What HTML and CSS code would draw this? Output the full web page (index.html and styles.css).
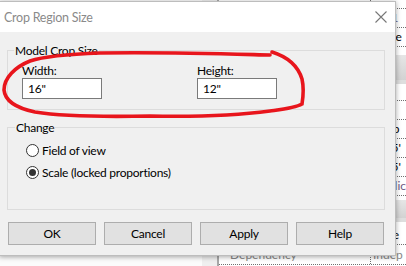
FILE: index.html
```html
<!DOCTYPE html>
<html lang="en">
<head>
  <meta charset="UTF-8" />
  <title>Crop Region Size</title>
  <link rel="stylesheet" href="styles.css">
</head>
<body>
  <div class="desktop">

    <!-- application behind the dialog -->
    <div class="app">
      <div class="app-left"></div>
      <div class="app-gutter"></div>
      <div class="props">
        <div class="prop-row top"><span class="prop-name"></span><span class="prop-value"></span></div>
        <div class="prop-row"><span class="prop-name"></span><span class="prop-value muted">&nbsp;&nbsp;&nbsp;&nbsp;&nbsp;&nbsp;1</span></div>
        <div class="prop-row"><span class="prop-name"></span><span class="prop-value">None</span></div>
        <div class="prop-spacer"></div>
        <div class="prop-header"></div>
        <div class="prop-header thin"></div>
        <div class="prop-row low"><span class="prop-name"></span><span class="prop-value"></span></div>
        <div class="prop-row"><span class="prop-name"></span><span class="prop-value"></span></div>
        <div class="prop-row"><span class="prop-name"></span><span class="prop-value">Cusp</span></div>
        <div class="prop-row"><span class="prop-name"></span><span class="prop-value">&nbsp;&nbsp;&nbsp;&nbsp;&nbsp;&nbsp;5'</span></div>
        <div class="prop-row"><span class="prop-name"></span><span class="prop-value">&nbsp;&nbsp;&nbsp;&nbsp;&nbsp;&nbsp;5'</span></div>
        <div class="prop-row"><span class="prop-name"></span><span class="prop-value muted">Applic</span></div>
        <div class="prop-spacer small"></div>
        <div class="prop-header short"></div>
        <div class="prop-header thin"></div>
        <div class="prop-spacer small"></div>
        <div class="prop-row"><span class="prop-name"></span><span class="prop-value">&nbsp;&nbsp;&nbsp;Vie</span></div>
        <div class="prop-row last"><span class="prop-name faded">Dependency</span><span class="prop-value faded">Indep</span></div>
      </div>
    </div>

    <!-- dialog -->
    <div class="dialog">
      <div class="titlebar">
        <span class="title">Crop Region Size</span>
        <svg class="close" width="12" height="12" viewBox="0 0 12 12">
          <path d="M0.5 0.5 L11.5 11.5 M11.5 0.5 L0.5 11.5" stroke="#777" stroke-width="1.1" fill="none" />
        </svg>
      </div>

      <div class="dialog-body">
        <div class="group group-size">
          <span class="group-title">Model Crop Size</span>
          <div class="fields">
            <div class="field">
              <span class="field-label">Width:</span>
              <div class="text-input">16"</div>
            </div>
            <div class="field">
              <span class="field-label">Height:</span>
              <div class="text-input">12"</div>
            </div>
          </div>
        </div>

        <div class="group group-change">
          <span class="group-title">Change</span>
          <div class="radios">
            <div class="radio-row"><span class="radio"></span>Field of view</div>
            <div class="radio-row"><span class="radio checked"></span>Scale (locked proportions)</div>
          </div>
        </div>

        <div class="buttons">
          <button class="btn">OK</button>
          <button class="btn">Cancel</button>
          <button class="btn">Apply</button>
          <button class="btn">Help</button>
        </div>
      </div>
    </div>

    <!-- hand drawn red markup -->
    <svg class="markup" width="406" height="266" viewBox="0 0 406 266">
      <path d="M270 55 C230 54 170 52 100 53 C70 54 45 56 30 61 C15 67 4 78 4 90 C5 101 16 108 35 112 C60 116 100 117 150 116 C200 117 240 115 270 111 C285 109 295 108 302 104 C303 98 304 88 302 79 C298 66 288 57 272 52"
            stroke="#e8151c" stroke-width="3.6" fill="none" stroke-linecap="round" />
    </svg>

  </div>
</body>
</html>
```

FILE: styles.css
```css
* {
  box-sizing: border-box;
}

body {
  margin: 0;
  background: #ffffff;
  font-family: Lato, 'Noto Sans', sans-serif;
  font-size: 12px;
  line-height: 15px;
  color: #000;
}

.desktop {
  position: relative;
  width: 406px;
  height: 266px;
  overflow: hidden;
}

/* background application */
.app {
  display: flex;
  height: 266px;
}

.app-left {
  width: 203px;
  background: #fbfbfb;
}

.app-gutter {
  width: 17px;
  background: #efefef;
  border-right: 2px solid #a8a8a8;
}

.props {
  flex: 1;
  display: flex;
  flex-direction: column;
}

.prop-row {
  display: flex;
  flex: none;
  height: 19px;
  line-height: 18px;
  border-bottom: 1px dotted #707070;
}

.prop-row.top {
  height: 9px;
  line-height: 8px;
}

.prop-row.low {
  height: 17px;
}

.prop-row.last {
  height: 20px;
  padding-top: 1px;
}

.prop-spacer {
  flex: none;
  height: 8px;
}

.prop-spacer.small {
  height: 4px;
}

.prop-name {
  width: 152px;
  padding-left: 11px;
  border-right: 1px dotted #707070;
  white-space: nowrap;
}

.prop-value {
  flex: 1;
  padding-left: 2px;
  white-space: nowrap;
  overflow: hidden;
}

.muted {
  color: #6e5a82;
}

.faded {
  color: #888;
}

.prop-header {
  flex: none;
  height: 25px;
  background: linear-gradient(#e6e6e6, #d2d2d2);
}

.prop-header.short {
  height: 18px;
}

.prop-header.thin {
  height: 4px;
  background: #dedede;
}

/* dialog window */
.dialog {
  position: absolute;
  left: -1px;
  top: 1px;
  width: 397px;
  height: 255px;
  border: 1px solid #bdbdbd;
  background: #f0f0f0;
  box-shadow: 0 1px 5px rgba(0, 0, 0, 0.35);
  display: flex;
  flex-direction: column;
  letter-spacing: -0.25px;
}

.titlebar {
  flex: none;
  height: 30px;
  background: #ffffff;
  display: flex;
  align-items: center;
  justify-content: space-between;
  padding: 0 8px 0 4px;
}

.title {
  font-size: 12.5px;
  color: #8a8a8a;
}

.close {
  margin-top: -1px;
}

.dialog-body {
  flex: 1;
  display: flex;
  flex-direction: column;
}

.group {
  border: 1px solid #dcdcdc;
  margin: 18px 10px 0 7px;
}

.group-title {
  display: block;
  width: fit-content;
  line-height: 15px;
  margin: -8px 0 0 6px;
  padding: 0 1px;
  background: #f0f0f0;
}

.group-size {
  padding-bottom: 10px;
}

.fields {
  display: grid;
  grid-template-columns: 175px 80px;
  margin-top: 5px;
  padding-left: 14px;
}

.field {
  display: flex;
  flex-direction: column;
}

.field-label {
  line-height: 15px;
}

.text-input {
  height: 21px;
  width: 80px;
  line-height: 19px;
  padding: 0 5px;
  border: 1px solid #7a7a7a;
  background: #ffffff;
}

.group-change {
  margin-top: 17px;
  padding-bottom: 26px;
}

.group-change .group-title {
  margin-left: 7px;
}

.radios {
  margin-top: 4px;
  padding-left: 18px;
}

.radio-row {
  display: flex;
  align-items: center;
  gap: 3px;
  height: 22px;
}

.radio {
  width: 13px;
  height: 13px;
  border: 1px solid #333;
  border-radius: 50%;
  background: #fff;
  display: flex;
  align-items: center;
  justify-content: center;
}

.radio.checked::after {
  content: '';
  width: 7px;
  height: 7px;
  border-radius: 50%;
  background: #333;
}

.buttons {
  display: flex;
  gap: 8px;
  padding-left: 8px;
  margin-top: 12px;
}

.btn {
  width: 88px;
  height: 23px;
  border: 1px solid #adadad;
  background: #e1e1e1;
  font-family: inherit;
  font-size: 12px;
  letter-spacing: inherit;
  color: #000;
  padding: 0;
}

.markup {
  position: absolute;
  left: 0;
  top: 0;
  pointer-events: none;
}
```
